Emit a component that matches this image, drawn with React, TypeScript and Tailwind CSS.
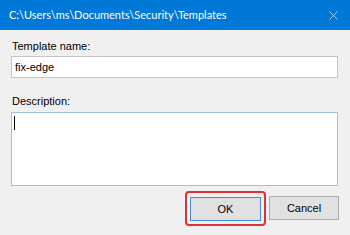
import { X } from 'lucide-react';

export default function App() {
  return (
    <div className="flex flex-col w-[350px] h-[235px] bg-[#f0f0f0] overflow-hidden font-['Liberation_Sans',sans-serif]">
      <div className="flex items-center justify-between h-[30px] bg-[#0078d7] pl-[9px] pr-[9px] text-white">
        <span className="text-[11px] font-['Lato',sans-serif]">C:\Users\ms\Documents\Security\Templates</span>
        <X size={15} strokeWidth={1.2} className="text-[#cfe4f7]" />
      </div>

      <div className="flex flex-col flex-1 px-[11px] pt-[9px]">
        <label className="text-[11px] leading-[14px] text-black pl-[1px]">Template name:</label>
        <div className="mt-[3px] h-[22px] w-[327px] border border-[#c4c4c4] bg-white flex items-center px-[3px] text-[11px] text-black">
          fix-edge
        </div>

        <label className="mt-[16px] text-[11px] leading-[14px] text-black pl-[1px]">Description:</label>
        <div className="mt-[4px] h-[74px] w-[327px] border border-[#9cc3e5] bg-white px-[2px] pt-[3px]">
          <div className="w-px h-[14px] bg-black" />
        </div>

        <div className="flex justify-end gap-[6px] mt-[10px]">
          <div className="rounded-[4px] border-2 border-[#e0303a] p-[3px] -mt-[5px] -mr-[3px]">
            <button className="w-[71px] h-[24px] bg-[#e1e1e1] border border-[#3c8fd8] text-[11px] text-black">OK</button>
          </div>
          <button className="w-[70px] h-[24px] bg-[#e1e1e1] border border-[#adadad] text-[11px] text-black">Cancel</button>
        </div>
      </div>
    </div>
  );
}
